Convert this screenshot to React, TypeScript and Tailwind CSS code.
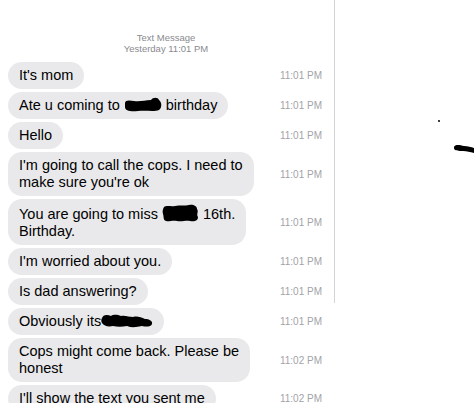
import React from "react"

const FONT = { fontFamily: '"Liberation Sans", Arial, sans-serif' }

function Blob({ kind }: { kind: 1 | 2 | 3 }) {
  if (kind === 1)
    return (
      <svg width="38" height="16" viewBox="0 0 38 16" className="inline-block align-[-3px]">
        <path d="M1 6 C1 3 5 3 10 4 C16 5 21 3 27 3 C29 0 34 0 35 3 C38 5 38 11 35 13 C30 15 22 13 14 14 C7 15 1 14 1 10 Z" fill="#000" />
      </svg>
    )
  if (kind === 2)
    return (
      <svg width="37" height="19" viewBox="0 0 37 19" className="inline-block align-[-4px]">
        <path d="M2 3 C5 1 9 3 13 2 C18 1 23 2 27 1 C31 0 35 2 35 5 C37 8 34 10 36 13 C36 17 32 18 28 17 C24 16 20 18 15 17 C10 16 7 18 4 17 C1 16 2 13 1 10 C0 7 1 5 2 3 Z" fill="#000" />
      </svg>
    )
  return (
    <svg width="52" height="16" viewBox="0 0 52 16" className="inline-block align-[-3px]">
      <path d="M1 5 C3 1 7 2 10 3 C13 1 17 2 20 3 C24 2 28 4 32 4 C36 3 40 4 44 6 C48 6 52 8 51 11 C50 14 45 14 41 13 C36 14 31 15 26 13 C21 14 16 14 12 13 C7 14 3 13 1 10 C0 8 0 7 1 5 Z" fill="#000" />
    </svg>
  )
}

type Msg = { lines: React.ReactNode[]; time: string }

const messages: Msg[] = [
  { lines: ["It's mom"], time: "11:01 PM" },
  { lines: [<>Ate u coming to <Blob kind={1} /> birthday</>], time: "11:01 PM" },
  { lines: ["Hello"], time: "11:01 PM" },
  { lines: ["I'm going to call the cops. I need to", "make sure you're ok"], time: "11:01 PM" },
  { lines: [<>You are going to miss <Blob kind={2} /> 16th.</>, "Birthday."], time: "11:01 PM" },
  { lines: ["I'm worried about you."], time: "11:01 PM" },
  { lines: ["Is dad answering?"], time: "11:01 PM" },
  { lines: [<>Obviously its<Blob kind={3} /></>], time: "11:01 PM" },
  { lines: ["Cops might come back. Please be", "honest"], time: "11:02 PM" },
  { lines: ["I'll show the text you sent me"], time: "11:02 PM" },
]

export default function App() {
  return (
    <div className="relative w-[474px] h-[403px] overflow-hidden bg-white" style={FONT}>
      <div className="w-[332px] pt-[32px]">
        <div className="text-center text-[9.5px] leading-[11px] text-[#8a8a8f]">
          <div>Text Message</div>
          <div>Yesterday 11:01 PM</div>
        </div>
        <div className="mt-[8px] flex flex-col gap-[3px]">
          {messages.map((m, i) => (
            <div key={i} className="flex items-center">
              <div className="flex-1 pl-[8px]">
                <div className="inline-block rounded-[14px] bg-[#e9e9eb] px-[11px] py-[5px] text-[14.5px] leading-[17px] text-black whitespace-nowrap">
                  {m.lines.map((l, j) => (
                    <div key={j}>{l}</div>
                  ))}
                </div>
              </div>
              <div className="w-[60px] pr-[10px] text-right text-[10px] text-[#a3a3a8]">{m.time}</div>
            </div>
          ))}
        </div>
      </div>
      {/* overlapping screenshot edge + scribbles */}
      <div className="absolute left-[334px] top-0 h-[303px] w-px bg-[#d4d4d6]" />
      <div className="absolute left-[438px] top-[120px] h-[2px] w-[2px] rounded-full bg-black" />
      <svg className="absolute left-[452px] top-[143px]" width="22" height="12" viewBox="0 0 22 12">
        <path d="M2 4 C3 1 8 2 12 3 C16 3 19 4 22 5 L22 10 C18 9 15 8 11 8 C7 8 2 8 2 5 Z" fill="#000" />
      </svg>
    </div>
  )
}
